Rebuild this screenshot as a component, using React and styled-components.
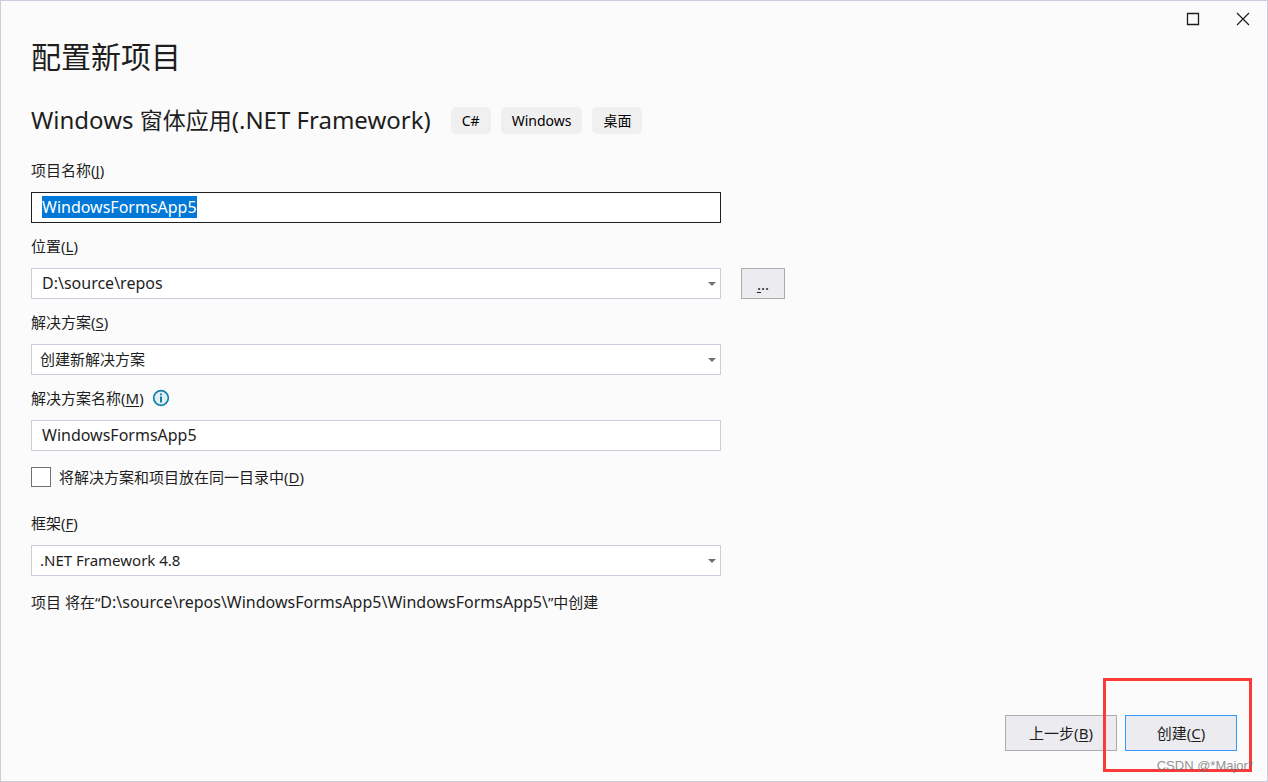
import React, { useEffect, useRef } from "react";
import styled, { createGlobalStyle } from "styled-components";

const GlobalStyle = createGlobalStyle`
  * {
    box-sizing: border-box;
  }
  body {
    margin: 0;
    background: #fbfbfb;
    color: #1e1e1e;
    font-family: "Noto Sans", "Noto Sans CJK SC", sans-serif;
    font-size: 15px;
    line-height: 22px;
  }
  input, select, button {
    color: inherit;
    font: inherit;
  }
`;

const Chevron = () => (
  <ChevronIcon width="8" height="4" viewBox="0 0 8 4" aria-hidden="true">
    <path d="M0 0h8L4 4z" fill="#717171" />
  </ChevronIcon>
);

const InfoIcon = () => (
  <svg width="18" height="18" viewBox="0 0 18 18" aria-hidden="true">
    <circle cx="9" cy="9" r="7.3" fill="#e3eff3" stroke="#1080a8" strokeWidth="1.7" />
    <path d="M8 4.4h2v1.8H8zM8 7.4h2v6H8z" fill="#1080a8" />
  </svg>
);

const Combo = ({ id, options, indent, large }) => (
  <SelectWrapper>
    <Select id={id} $indent={indent} $large={large}>
      {options.map((option) => (
        <option key={option}>{option}</option>
      ))}
    </Select>
    <Chevron />
  </SelectWrapper>
);

const Key = ({ children }) => (
  <>
    (<Access>{children}</Access>)
  </>
);

const App = () => {
  const nameRef = useRef(null);

  // project name starts focused with its text selected
  useEffect(() => {
    nameRef.current.focus();
    nameRef.current.select();
  }, []);

  return (
    <Window>
      <GlobalStyle />
      <TitleBar>
        <WindowButton type="button" aria-label="最大化">
          <svg width="16" height="14" viewBox="0 0 16 14">
            <path d="M3.5 1.5h11v11h-11z" fill="none" stroke="#1e1e1e" strokeWidth="1.3" />
          </svg>
        </WindowButton>
        <WindowButton type="button" aria-label="关闭">
          <svg width="16" height="14" viewBox="0 0 16 14">
            <path d="M3 1l12 12M15 1L3 13" fill="none" stroke="#1e1e1e" strokeWidth="1.2" />
          </svg>
        </WindowButton>
      </TitleBar>

      <Content>
        <Title>配置新项目</Title>
        <Template>
          <TemplateName>
            Windows <Han>窗体应用</Han>(.NET Framework)
          </TemplateName>
          <Tags>
            <Tag>C#</Tag>
            <Tag>Windows</Tag>
            <Tag>桌面</Tag>
          </Tags>
        </Template>

        <Field>
          <Label htmlFor="name">
            项目名称<Key>J</Key>
          </Label>
          <TextInput id="name" ref={nameRef} defaultValue="WindowsFormsApp5" spellCheck={false} />
        </Field>

        <Field>
          <Label htmlFor="location">
            位置<Key>L</Key>
          </Label>
          <FieldRow>
            <Combo id="location" options={["D:\\source\\repos"]} indent={10} large />
            <BrowseButton type="button" aria-label="浏览">
              <Access>.</Access>..
            </BrowseButton>
          </FieldRow>
        </Field>

        <Field>
          <Label htmlFor="solution">
            解决方案<Key>S</Key>
          </Label>
          <Combo id="solution" options={["创建新解决方案"]} indent={8} />
        </Field>

        <Field>
          <LabelRow>
            <Label htmlFor="solutionName">
              解决方案名称<Key>M</Key>
            </Label>
            <InfoIcon />
          </LabelRow>
          <TextInput id="solutionName" defaultValue="WindowsFormsApp5" spellCheck={false} />
        </Field>

        <CheckLabel>
          <Checkbox type="checkbox" />
          <span>
            将解决方案和项目放在同一目录中<Key>D</Key>
          </span>
        </CheckLabel>

        <Field>
          <Label htmlFor="framework">
            框架<Key>F</Key>
          </Label>
          <Combo id="framework" options={[".NET Framework 4.8"]} indent={8} />
        </Field>

        <Summary>
          项目 将在“<Path>D:\source\repos\WindowsFormsApp5\WindowsFormsApp5\</Path>”中创建
        </Summary>
      </Content>

      <Footer>
        <ActionButton type="button">
          上一步<Key>B</Key>
        </ActionButton>
        <Highlighted>
          <ActionButton type="button" $primary>
            创建<Key>C</Key>
          </ActionButton>
          <HighlightBox />
          <Watermark>CSDN @*Major*</Watermark>
        </Highlighted>
      </Footer>
    </Window>
  );
};

export default App;

const Window = styled.div`
  display: flex;
  flex-direction: column;
  min-height: 100vh;
  border: 1px solid #ccccdd;
  overflow: hidden;
`;

const TitleBar = styled.header`
  display: flex;
  justify-content: flex-end;
`;

const WindowButton = styled.button`
  display: flex;
  align-items: center;
  justify-content: center;
  width: 50px;
  height: 36px;
  padding: 0;
  border: none;
  background: transparent;
`;

const Content = styled.main`
  padding: 0 30px;
`;

const Title = styled.h1`
  margin: 0 0 25px;
  font-size: 30px;
  font-weight: 400;
  line-height: 40px;
`;

const Template = styled.div`
  display: flex;
  align-items: center;
  gap: 20px;
  margin-bottom: 21px;
`;

const TemplateName = styled.h2`
  margin: 0;
  font-size: 24px;
  font-weight: 400;
  line-height: 36px;
`;

const Han = styled.span`
  font-size: 23px;
`;

const Tags = styled.div`
  display: flex;
  gap: 10px;
`;

const Tag = styled.span`
  padding: 3px 11px;
  border-radius: 5px;
  background: #f0f0f0;
  color: #000;
  font-size: 14px;
  line-height: 21px;
`;

const Field = styled.div`
  display: flex;
  flex-direction: column;
  gap: 11px;
  max-width: 690px;
  margin-bottom: 12px;
`;

const Label = styled.label`
  align-self: flex-start;
`;

const LabelRow = styled.div`
  display: flex;
  align-items: center;
  gap: 8px;
`;

const Access = styled.span`
  text-decoration: underline;
  text-underline-offset: 2px;
`;

const TextInput = styled.input`
  width: 100%;
  height: 31px;
  padding: 0 10px 2px;
  border: 1px solid #ccccdd;
  border-radius: 0;
  background: #fff;
  font-size: 16px;
  outline: none;

  &:focus {
    border-color: #1e1e1e;
    caret-color: transparent;
  }
  &::selection {
    background: #0078d7;
    color: #fff;
  }
`;

const FieldRow = styled.div`
  display: grid;
  grid-template-columns: 100% 44px;
  gap: 20px;
`;

const SelectWrapper = styled.div`
  position: relative;
`;

const Select = styled.select`
  display: block;
  width: 100%;
  height: 31px;
  padding: 0 24px 2px ${({ $indent }) => $indent}px;
  border: 1px solid #ccccdd;
  border-radius: 0;
  background: #fff;
  font-size: ${({ $large }) => ($large ? 16 : 15)}px;
  appearance: none;
  outline: none;
`;

const ChevronIcon = styled.svg`
  position: absolute;
  top: 14px;
  right: 5px;
  pointer-events: none;
`;

const BrowseButton = styled.button`
  height: 31px;
  padding: 0;
  border: 1px solid #acacac;
  background: #ececf0;
`;

const CheckLabel = styled.label`
  display: flex;
  align-items: center;
  gap: 8px;
  margin: 15px 0 24px;
`;

const Checkbox = styled.input`
  appearance: none;
  width: 20px;
  height: 20px;
  margin: 0;
  border: 1px solid #717171;
  background: #fff;

  &:checked {
    background: #717171;
  }
`;

const Summary = styled.p`
  margin: 15px 0;
`;

const Path = styled.span`
  font-size: 16px;
`;

const Footer = styled.footer`
  display: flex;
  justify-content: flex-end;
  gap: 8px;
  margin-top: auto;
  padding: 30px;
`;

const ActionButton = styled.button`
  width: 112px;
  height: 36px;
  padding: 0;
  border: 1px solid ${({ $primary }) => ($primary ? "#3399ff" : "#acacac")};
  background: #ececf0;
`;

const Highlighted = styled.div`
  position: relative;
`;

const HighlightBox = styled.div`
  position: absolute;
  inset: -37px -15px -21px -22px;
  border: 3px solid #fc3a3a;
  pointer-events: none;
`;

const Watermark = styled.span`
  position: absolute;
  right: -16px;
  bottom: -24px;
  color: rgba(110, 110, 110, 0.75);
  font-family: "Liberation Sans", Arial, sans-serif;
  font-size: 13px;
  line-height: 18px;
  white-space: nowrap;
  pointer-events: none;
`;
